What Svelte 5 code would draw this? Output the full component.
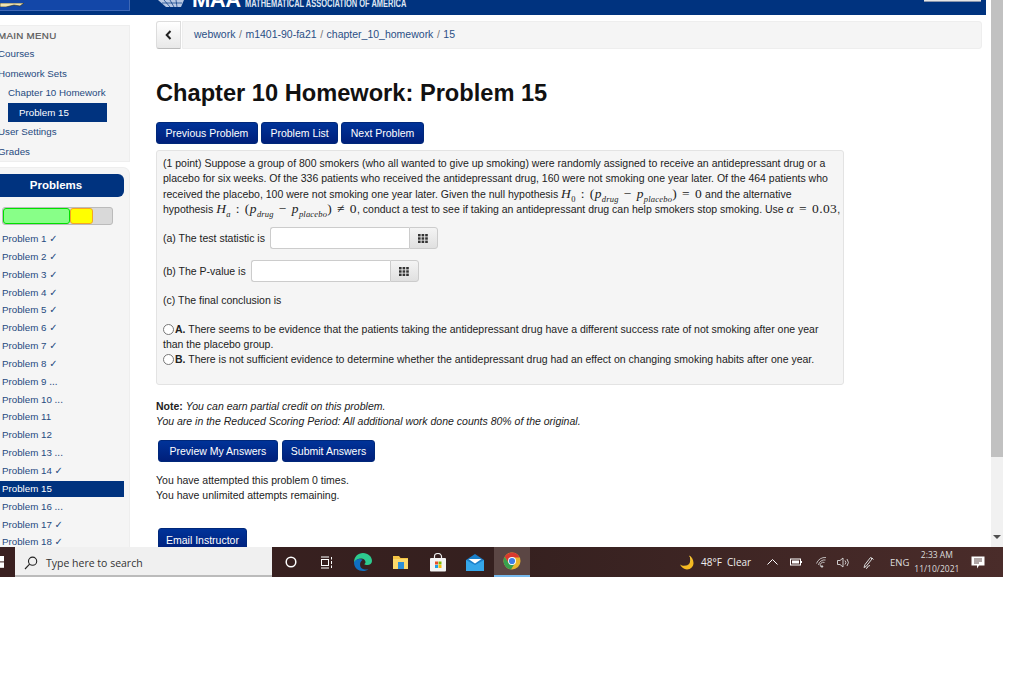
<script lang="ts">
  const menu = [
    { label: 'Courses' },
    { label: 'Homework Sets' },
    { label: 'Chapter 10 Homework', sub: true },
    { label: 'Problem 15', active: true },
    { label: 'User Settings' },
    { label: 'Grades' }
  ];

  const marks = ['✓', '✓', '✓', '✓', '✓', '✓', '✓', '✓', '...', '...', '', '', '...', '✓', '', '...', '✓', '✓'];
  const problems = marks.map((mark, i) => ({ n: i + 1, mark }));
</script>

{#snippet gridIcon()}
  <svg width="10" height="9" viewBox="0 0 10 9" fill="#333">
    <rect x="0" y="0" width="2.6" height="2.4" /><rect x="3.6" y="0" width="2.6" height="2.4" /><rect x="7.2" y="0" width="2.6" height="2.4" />
    <rect x="0" y="3.3" width="2.6" height="2.4" /><rect x="3.6" y="3.3" width="2.6" height="2.4" /><rect x="7.2" y="3.3" width="2.6" height="2.4" />
    <rect x="0" y="6.6" width="2.6" height="2.4" /><rect x="3.6" y="6.6" width="2.6" height="2.4" /><rect x="7.2" y="6.6" width="2.6" height="2.4" />
  </svg>
{/snippet}

<div class="screen">
  <div class="window">
    <div class="viewport">
      <header class="masthead">
        <div class="brand">
          <svg class="star" width="26" height="4" viewBox="0 0 26 4"><path d="M0 0h24l-4 3-6-1-8 2H0z" fill="#efe3b4" stroke="#2a2a1a" stroke-width=".6" /></svg>
          <span class="brand-name">WeBWorK</span>
        </div>
        <div class="maa">
          <svg class="maa-mark" width="26" height="8" viewBox="0 0 26 8"><path d="M0 0h26l-3 7H8z" fill="#b9c9e4" /><path d="M6 0l6 7M12 0l4 7M18 0l1 7M4 3h20" stroke="#00337f" stroke-width=".7" /></svg>
          <span class="maa-letters">MAA</span>
          <span class="maa-text">MATHEMATICAL ASSOCIATION OF AMERICA</span>
        </div>
        <div class="head-button"></div>
      </header>

      <div class="columns">
        <aside class="sidebar">
          <nav class="panel menu">
            <div class="menu-title">MAIN MENU</div>
            {#each menu as item}
              <a class="menu-item" class:sub={item.sub} class:active={item.active} href="#top">{item.label}</a>
            {/each}
          </nav>

          <div class="panel problems">
            <div class="problems-title">Problems</div>
            <div class="progress">
              <div class="seg correct"></div>
              <div class="seg partial"></div>
            </div>
            {#each problems as p}
              <a class="problem" class:current={p.n === 15} href="#top">Problem {p.n} <span class="mark">{p.mark}</span></a>
            {/each}
          </div>
        </aside>

        <main class="content">
          <div class="crumbs">
            <button class="back" aria-label="Back">
              <svg width="7" height="10" viewBox="0 0 7 10"><path d="M5.5 1L1.7 5l3.8 4" fill="none" stroke="#222" stroke-width="2" /></svg>
            </button>
            <div class="crumb-bar">webwork <i>/</i> m1401-90-fa21 <i>/</i> chapter_10_homework <i>/</i> 15</div>
          </div>

          <h1>Chapter 10 Homework: Problem 15</h1>

          <div class="btn-row nav-row">
            <button class="btn">Previous Problem</button>
            <button class="btn">Problem List</button>
            <button class="btn">Next Problem</button>
          </div>

          <section class="problem-box">
            <p class="statement">
              (1 point) Suppose a group of 800 smokers (who all wanted to give up smoking) were randomly assigned to receive an antidepressant drug or a placebo for six weeks. Of the 336 patients who received the antidepressant drug, 160 were not smoking one year later. Of the 464 patients who received the placebo, 100 were not smoking one year later. Given the null hypothesis
              <span class="math"><em>H</em><sub>0</sub> : (<em>p</em><sub><em>drug</em></sub> − <em>p</em><sub><em>placebo</em></sub>) = 0</span>
              and the alternative hypothesis
              <span class="math"><em>H</em><sub><em>a</em></sub> : (<em>p</em><sub><em>drug</em></sub> − <em>p</em><sub><em>placebo</em></sub>) ≠ 0</span>,
              conduct a test to see if taking an antidepressant drug can help smokers stop smoking. Use
              <span class="math"><em>α</em> = 0.03</span>,
            </p>

            <div class="answer first">
              <label for="ans-a">(a) The test statistic is</label>
              <input id="ans-a" type="text" />
              <span class="addon">{@render gridIcon()}</span>
            </div>
            <div class="answer">
              <label for="ans-b">(b) The P-value is</label>
              <input id="ans-b" type="text" />
              <span class="addon">{@render gridIcon()}</span>
            </div>

            <p class="conclusion">(c) The final conclusion is</p>

            <div class="choices">
              <label><input type="radio" name="final" /><b>A.</b> There seems to be evidence that the patients taking the antidepressant drug have a different success rate of not smoking after one year than the placebo group.</label>
              <label><input type="radio" name="final" /><b>B.</b> There is not sufficient evidence to determine whether the antidepressant drug had an effect on changing smoking habits after one year.</label>
            </div>
          </section>

          <div class="note">
            <div><b>Note:</b> <em>You can earn partial credit on this problem.</em></div>
            <div><em>You are in the Reduced Scoring Period: All additional work done counts 80% of the original.</em></div>
          </div>

          <div class="btn-row submit-row">
            <button class="btn">Preview My Answers</button>
            <button class="btn">Submit Answers</button>
          </div>

          <div class="attempts">
            <div>You have attempted this problem 0 times.</div>
            <div>You have unlimited attempts remaining.</div>
          </div>

          <button class="btn email">Email Instructor</button>
        </main>
      </div>
    </div>

    <div class="scrollbar">
      <div class="thumb"></div>
      <svg class="arrow" width="8" height="5" viewBox="0 0 8 5"><path d="M0 0h8L4 4z" fill="#505050" /></svg>
    </div>
  </div>

  <footer class="taskbar">
    <div class="start">
      <svg width="5" height="12" viewBox="0 0 5 12" fill="#fff"><rect x="0" y="0" width="4" height="5.4" /><rect x="0" y="6.4" width="4" height="5.4" /></svg>
    </div>
    <div class="search">
      <svg width="14" height="14" viewBox="0 0 14 14" fill="none" stroke="#222" stroke-width="1.1"><circle cx="8.6" cy="5.2" r="4.1" /><path d="M5.6 8.2L1 13" /></svg>
      <span>Type here to search</span>
    </div>
    <div class="task">
      <svg width="12" height="12" viewBox="0 0 12 12"><circle cx="6" cy="6" r="4.8" fill="none" stroke="#fff" stroke-width="1.5" /></svg>
    </div>
    <div class="task taskview">
      <svg width="13" height="13" viewBox="0 0 13 13" fill="none" stroke="#fff" stroke-width="1"><rect x="1.5" y="3.5" width="7" height="6" /><path d="M1 1h8M1 12h8M11.5 1v2.5M11.5 5v3M11.5 9.5V12" /></svg>
    </div>
    <div class="task">
      <svg width="20" height="20" viewBox="0 0 20 20">
        <path d="M1 10.5C1 4.8 5 1 10 1c5.200 0 9 3.700 9 8 0 2.700-2.200 4-4.500 4-1.500 0-2.800-.4-3.300-1 .9-.4 1.300-1.100 1.300-2 0-2-2-3.600-4.300-3.600C5 6.400 3 8 1 10.500z" fill="#2dcb8f" />
        <path d="M1 10.500C1 15.500 5 19 10 19c2.200 0 4-.7 5.500-1.800-3.500 1-8 0-8.400-4-.3-2.400.8-4.500 2.700-5.500C5.500 6 2 7.700 1 10.500z" fill="#0f6fc0" />
      </svg>
    </div>
    <div class="task">
      <svg width="17" height="15" viewBox="0 0 17 15">
        <path d="M1 1h6l1.500 2H16v11H1z" fill="#f5c344" />
        <rect x="1" y="4" width="15" height="10" fill="#fbd96b" />
        <rect x="6" y="7" width="6" height="7" fill="#2b8fd8" />
      </svg>
    </div>
    <div class="task">
      <svg width="18" height="19" viewBox="0 0 18 19">
        <path d="M5.500 5V3.500a3.500 3 0 0 1 7 0V5" fill="none" stroke="#eee" stroke-width="1.200" />
        <rect x="1" y="5" width="16" height="13.500" rx="1" fill="#f4f4f4" />
        <rect x="6" y="8.500" width="3" height="3" fill="#e8502a" /><rect x="9.500" y="8.500" width="3" height="3" fill="#7db900" />
        <rect x="6" y="12" width="3" height="3" fill="#1da1e8" /><rect x="9.500" y="12" width="3" height="3" fill="#f8b90c" />
      </svg>
    </div>
    <div class="task">
      <svg width="18" height="17" viewBox="0 0 18 17">
        <path d="M0 6l9-6 9 6v11H0z" fill="#1a7fc9" />
        <path d="M0 6l9 5 9-5v11H0z" fill="#35a7ea" />
        <path d="M2.500 5h13L9 9.500z" fill="#fff" />
      </svg>
    </div>
    <div class="task chrome">
      <svg width="18" height="18" viewBox="0 0 18 18">
        <circle cx="9" cy="9" r="8.500" fill="#e9b52c" />
        <path d="M9 .5A8.500 8.500 0 0 0 1.600 4.800L5.500 11 9 5.500h7.500A8.500 8.500 0 0 0 9 .5z" fill="#d93a2f" />
        <path d="M1.600 4.800A8.500 8.500 0 0 0 8 17.400L11.800 11.500H6z" fill="#39a04e" />
        <circle cx="9" cy="9" r="4" fill="#fff" /><circle cx="9" cy="9" r="3.100" fill="#3f7fe6" />
      </svg>
    </div>

    <div class="tray">
      <div class="weather">
        <svg width="15" height="15" viewBox="0 0 15 15"><path d="M10 .5c3 4 1.500 10-4 10.500-2 .2-3.600-.3-5-1.400C2.500 12.600 5 14.500 8 14.500c3.800 0 6.500-3 6.500-6.500C14.500 4.500 12.500 1.500 10 .5z" fill="#f5b921" /><path d="M10 .5c3 4 1.500 10-4 10.500-2 .2-3.600-.3-5-1.400 3 2.200 9 1.500 11-3 .8-2 .3-4.600-2-6.100z" fill="#fbd54b" /></svg>
        <span>48°F&nbsp; Clear</span>
      </div>
      <svg class="t-caret" width="11" height="6" viewBox="0 0 11 6" fill="none" stroke="#fff" stroke-width="1"><path d="M.5 5.500l5-5 5 5" /></svg>
      <svg class="t-batt" width="12" height="8" viewBox="0 0 12 8"><rect x=".5" y="1" width="10" height="6" fill="none" stroke="#fff" /><rect x="2" y="2.500" width="7" height="3" fill="#fff" /><rect x="11" y="3" width="1" height="2" fill="#fff" /></svg>
      <svg class="t-wifi" width="11" height="11" viewBox="0 0 11 11" fill="none" stroke="#ddd" stroke-width=".8"><path d="M.5 6.500a9 9 0 0 1 9.500-6M2.500 8a6 6 0 0 1 7-5M4.500 9.500a3 3 0 0 1 4-4" /><circle cx="6" cy="9.500" r=".8" fill="#ddd" /></svg>
      <svg class="t-vol" width="13" height="11" viewBox="0 0 13 11" fill="none" stroke="#ddd" stroke-width=".9"><path d="M.5 3.500h2.500L6 1v9L3 7.500H.5z" /><path d="M8 3.500a3 3 0 0 1 0 4M10 2a5.500 5.500 0 0 1 0 7" /></svg>
      <svg class="t-pen" width="12" height="13" viewBox="0 0 12 13" fill="none" stroke="#ddd" stroke-width="1"><path d="M1 11.500l2-1L9 3 7.500 1.500l-5.500 7zM8.500 1.500l2 2M3 12.500c2 0 1-3 4-3" /></svg>
      <span class="t-lang">ENG</span>
      <div class="clock"><div>2:33 AM</div><div>11/10/2021</div></div>
      <svg class="t-note" width="14" height="13" viewBox="0 0 14 13"><path d="M.5.500h13v9H8L6 12.500V9.500H.5z" fill="#fff" /><path d="M3 3h8M3 5h8M3 7h5" stroke="#3a2222" stroke-width=".8" /></svg>
    </div>
  </footer>
</div>

<style>
  :global(body) {
    background: #fff;
    font-family: "Liberation Sans", Arial, sans-serif;
  }

  .screen {
    width: 1003px;
    height: 577px;
    display: flex;
    flex-direction: column;
    overflow: hidden;
    font-family: "Liberation Sans", Arial, sans-serif;
    font-size: 10.5px;
    line-height: 15px;
    color: #333;
  }

  .window {
    height: 547px;
    display: flex;
  }

  .viewport {
    width: 986px;
    margin-right: 5px;
    overflow: hidden;
  }

  .scrollbar {
    width: 12px;
    background: #f1f1f1;
    display: flex;
    flex-direction: column;
    align-items: center;
  }

  .thumb {
    width: 100%;
    height: 457px;
    background: #c1c1c1;
  }

  .arrow {
    margin-top: 78px;
  }

  /* masthead, cropped by the top edge of the shot */
  .masthead {
    height: 15px;
    background: #00337f;
    display: flex;
    overflow: hidden;
  }

  .brand {
    width: 129px;
    height: 10px;
    background: #1347a8;
    border: 1px solid #3f68b5;
    border-width: 0 1px 1px 0;
    display: flex;
    align-items: flex-end;
    gap: 6px;
    flex: none;
    overflow: hidden;
  }

  .star {
    flex: none;
    margin-bottom: 3px;
  }

  .brand-name {
    color: #fff;
    font-size: 20px;
    line-height: 20px;
    letter-spacing: 3px;
    font-weight: 700;
    margin-bottom: 8px;
  }

  .maa {
    margin-left: 28px;
    display: flex;
    height: 9px;
    align-items: flex-end;
    flex: none;
  }

  .maa-mark {
    flex: none;
    margin-bottom: 1px;
  }

  .maa-letters {
    margin-left: 8px;
    color: #fff;
    font-size: 22px;
    line-height: 22px;
    font-weight: 700;
    margin-bottom: -2px;
    letter-spacing: -.5px;
  }

  .maa-text {
    margin-left: 4px;
    color: #dfe6f3;
    font-size: 11px;
    line-height: 11px;
    font-weight: 700;
    white-space: nowrap;
    transform: scaleX(.68);
    transform-origin: left bottom;
  }

  .head-button {
    margin-left: auto;
    margin-right: 5px;
    width: 57px;
    height: 1px;
    background: #e6e6e6;
    border-bottom: 1px solid #8a96ad;
  }

  .columns {
    display: flex;
  }

  /* page is scrolled sideways, so the sidebar starts off screen */
  .sidebar {
    width: 142px;
    margin-left: -12px;
    flex: none;
    padding-top: 10px;
    font-size: 9.75px;
  }

  .panel {
    background: #f5f5f5;
    border: 1px solid #eee;
    border-left: none;
    box-sizing: border-box;
  }

  .menu {
    height: 137px;
    padding: 2px 0 0 10px;
    display: flex;
    flex-direction: column;
  }

  .menu-title {
    font-weight: 400;
    color: #555;
    height: 20.5px;
    line-height: 15px;
    letter-spacing: .3px;
    -webkit-text-stroke: .2px #555;
  }

  .menu-item {
    height: 19.5px;
    line-height: 19.5px;
    color: #1f4a80;
    text-decoration: none;
    flex: none;
  }

  .menu-item.sub {
    padding-left: 10px;
  }

  .menu-item.active {
    margin-left: 10px;
    width: 99px;
    padding-left: 11px;
    box-sizing: border-box;
    background: #00337f;
    color: #fff;
  }

  .problems {
    margin-top: 5px;
    padding: 6px 5px 0 0;
    border-radius: 0 7px 0 0;
    display: flex;
    flex-direction: column;
  }

  .problems-title {
    height: 23px;
    line-height: 22px;
    background: #00337f;
    border-radius: 0 6px 6px 0;
    color: #fff;
    font-weight: 700;
    font-size: 11.5px;
    text-align: center;
    flex: none;
  }

  .progress {
    margin: 10px 10px 5px 14px;
    height: 18px;
    box-sizing: border-box;
    width: 111px;
    background: #d9d9d9;
    border: 1px solid #bbb;
    border-radius: 3px;
    display: flex;
    flex: none;
  }

  .seg {
    box-sizing: border-box;
    border-radius: 3px;
  }

  .seg.correct {
    width: 67px;
    background: #88ff88;
    border: 1.5px solid #00e000;
  }

  .seg.partial {
    width: 23px;
    background: #ffff00;
    border: 1.5px solid #f5a623;
  }

  .problem {
    height: 17.85px;
    line-height: 17.85px;
    padding-left: 14px;
    color: #1f4a80;
    text-decoration: none;
    flex: none;
  }

  .problem.current {
    background: #00337f;
    color: #fff;
    height: 15.85px;
    line-height: 15.85px;
    margin: 1px 0;
  }

  .mark {
    font-family: "Liberation Sans", "DejaVu Sans", sans-serif;
    font-size: 10px;
  }

  .content {
    margin-left: 26px;
    flex: 1;
    min-width: 0;
    padding-top: 6px;
  }

  .crumbs {
    display: flex;
    gap: 1px;
    height: 28px;
    margin-right: 4px;
  }

  .back {
    width: 25px;
    padding: 0;
    border: 1px solid #ddd;
    border-bottom-color: #bbb;
    border-radius: 3px 0 0 3px;
    background: linear-gradient(#fff, #e8e8e8);
    display: flex;
    align-items: center;
    justify-content: center;
  }

  .crumb-bar {
    flex: 1;
    background: #f5f5f5;
    border: 1px solid #eee;
    border-radius: 0 3px 3px 0;
    line-height: 25px;
    padding-left: 11px;
    color: #2a4f85;
  }

  .crumb-bar i {
    font-style: normal;
    color: #777;
    margin: 0 .6px;
  }

  h1 {
    margin: 31px 0 0;
    font-size: 23.64px;
    line-height: 27px;
    font-weight: 700;
    color: #111;
  }

  .btn-row {
    display: flex;
    gap: 3px;
  }

  .nav-row {
    margin-top: 15px;
  }

  .btn {
    height: 22px;
    padding: 0 8.5px;
    border: 1px solid #00287a;
    border-radius: 3px;
    background: linear-gradient(#003399, #001f7a);
    color: #fff;
    font: inherit;
    font-size: 10.5px;
    white-space: nowrap;
  }

  .problem-box {
    margin-top: 6px;
    width: 688px;
    height: 235px;
    box-sizing: border-box;
    background: #f5f5f5;
    border: 1px solid #e3e3e3;
    border-radius: 3px;
    padding: 5px 2px 5px 6px;
    color: #222;
  }

  .statement {
    margin: 0;
    line-height: 15.3px;
  }

  .math {
    font-family: "Liberation Serif", serif;
    font-size: 13.5px;
    line-height: 0;
    white-space: nowrap;
    letter-spacing: .4px;
    word-spacing: 1.2px;
  }

  .math sub {
    font-size: 8.5px;
    line-height: 0;
    letter-spacing: .2px;
  }

  .answer {
    display: flex;
    align-items: center;
    gap: 5px;
    height: 22px;
    margin-top: 11px;
  }

  .answer.first {
    margin-top: 10px;
  }

  .answer input {
    width: 139px;
    height: 22px;
    box-sizing: border-box;
    background: #fff;
    border: 1px solid #ccc;
    border-right: none;
    border-radius: 3px 0 0 3px;
    padding: 0 6px;
  }

  .addon {
    width: 29px;
    height: 22px;
    margin-left: -5px;
    box-sizing: border-box;
    border: 1px solid #ccc;
    border-radius: 0 3px 3px 0;
    background: linear-gradient(#f4f4f4, #e0e0e0);
    display: flex;
    align-items: center;
    justify-content: center;
  }

  .conclusion {
    margin: 11px 0 0;
  }

  .choices {
    margin-top: 14px;
    padding-right: 6px;
    display: flex;
    flex-direction: column;
  }

  .choices input {
    width: 11px;
    height: 11px;
    margin: 0 1px 0 0;
    vertical-align: -2px;
    accent-color: #888;
  }

  .note {
    margin-top: 14px;
    color: #222;
  }

  .submit-row {
    margin-top: 11px;
    margin-left: 2px;
    gap: 4px;
  }

  .submit-row .btn:first-child {
    padding: 0 10.5px;
  }

  .submit-row .btn:last-child {
    padding: 0 8px;
  }

  .attempts {
    margin-top: 11px;
    color: #222;
  }

  .email {
    display: block;
    margin: 25px 0 0 2px;
    height: 24px;
    padding: 0 7px;
  }

  .taskbar {
    height: 30px;
    flex: none;
    display: flex;
    align-items: stretch;
    background: linear-gradient(90deg, #3a2020, #35201f 50%, #4a2c2a);
    color: #fff;
    font-family: "Open Sans", sans-serif;
  }

  .start {
    width: 15px;
    display: flex;
    align-items: center;
    flex: none;
  }

  .search {
    width: 257px;
    flex: none;
    background: #f0f0f0;
    border-bottom: 2px solid #bbb;
    box-sizing: border-box;
    display: flex;
    align-items: center;
    gap: 8px;
    padding: 4px 0 0 9px;
    color: #333;
    font-size: 10.5px;
  }

  .task {
    width: 37.5px;
    flex: none;
    display: flex;
    align-items: center;
    justify-content: center;
  }

  .task.taskview {
    width: 34.5px;
  }

  .task.chrome {
    width: 36px;
    background: #5b4644;
    border-bottom: 2px solid #76b9ed;
    box-sizing: border-box;
  }

  .tray {
    flex: 1;
    display: flex;
    align-items: center;
    padding-left: 149px;
  }

  .weather {
    display: flex;
    align-items: center;
    gap: 7px;
    width: 83px;
    flex: none;
    font-size: 10px;
    color: #eee;
  }

  .t-caret { margin-left: 5px; flex: none; }
  .t-batt { margin-left: 12px; flex: none; }
  .t-wifi { margin-left: 14px; flex: none; }
  .t-vol { margin-left: 10px; flex: none; }
  .t-pen { margin-left: 13px; flex: none; }

  .t-lang {
    margin-left: 15px;
    font-size: 9.5px;
    color: #ddd;
    flex: none;
  }

  .clock {
    margin-left: 3px;
    width: 49px;
    flex: none;
    text-align: center;
    font-size: 8.5px;
    line-height: 14px;
    color: #ddd;
  }

  .t-note {
    margin-left: 10px;
    flex: none;
  }
</style>
